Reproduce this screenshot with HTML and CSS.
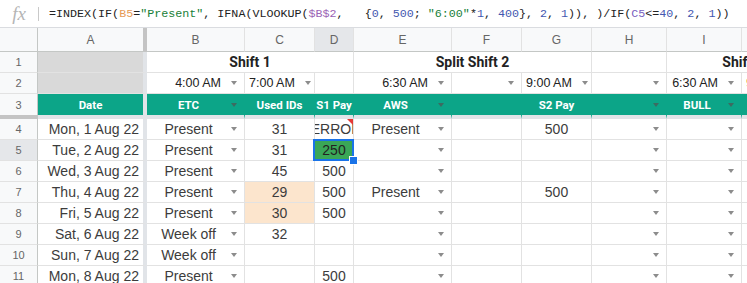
FILE: index.html
```html
<!DOCTYPE html>
<html lang="en">

<head>
    <meta charset="UTF-8">
    <meta name="viewport" content="width=device-width, initial-scale=1.0">
    <title>Shift Pay</title>
    <link rel="stylesheet" href="styles.css">
</head>

<body>
    <!-- barra de formula -->
    <div class="fbar">
        <span class="fx">fx</span>
        <span class="fsep"></span>
        <span class="formula">=INDEX(IF(<span class="ref1">B5</span>=<span class="str">"Present"</span>, IFNA(VLOOKUP(<span class="ref2">$B$2</span>,   {<span class="num">0</span>, <span class="num">500</span>; <span class="str">"6:00"</span>*<span class="num">1</span>, <span class="num">400</span>}, <span class="num">2</span>, <span class="num">1</span>)), )/IF(<span class="ref3">C5</span>&lt;=<span class="num">40</span>, <span class="num">2</span>, <span class="num">1</span>))</span>
    </div>

    <div class="sheet">
        <div class="row colhead">
            <div class="cell corner"></div>
            <div class="cell colh frz">A</div>
            <div class="cell colh">B</div>
            <div class="cell colh">C</div>
            <div class="cell colh selcol">D</div>
            <div class="cell colh">E</div>
            <div class="cell colh">F</div>
            <div class="cell colh">G</div>
            <div class="cell colh">H</div>
            <div class="cell colh">I</div>
            <div class="cell colh">J</div>
        </div>

        <div class="row">
            <div class="cell rnum">1</div>
            <div class="cell grey frz"></div>
            <div class="cell title span3">Shift 1</div>
            <div class="cell title span3">Split Shift 2</div>
            <div class="cell"></div>
            <div class="cell title span2">Shift 3</div>
        </div>

        <div class="row">
            <div class="cell rnum">2</div>
            <div class="cell grey frz"></div>
            <div class="cell dd time"><span class="v">4:00 AM</span></div>
            <div class="cell dd time"><span class="v">7:00 AM</span></div>
            <div class="cell"></div>
            <div class="cell dd time"><span class="v">6:30 AM</span></div>
            <div class="cell dd time"></div>
            <div class="cell dd time"><span class="v">9:00 AM</span></div>
            <div class="cell dd time"></div>
            <div class="cell dd time"><span class="v">6:30 AM</span></div>
            <div class="cell time orange"><span>9:00 AM</span></div>
        </div>

        <div class="row head">
            <div class="cell rnum">3</div>
            <div class="cell hd frz">Date</div>
            <div class="cell hd dd"><span class="v">ETC</span></div>
            <div class="cell hd">Used IDs</div>
            <div class="cell hd">S1 Pay</div>
            <div class="cell hd dd"><span class="v">AWS</span></div>
            <div class="cell hd"></div>
            <div class="cell hd">S2 Pay</div>
            <div class="cell hd dd"></div>
            <div class="cell hd dd"><span class="v">BULL</span></div>
            <div class="cell hd left">S3 Pay</div>
        </div>

        <div class="row">
            <div class="cell rnum">4</div>
            <div class="cell right frz">Mon, 1 Aug 22</div>
            <div class="cell dd"><span class="v">Present</span></div>
            <div class="cell center">31</div>
            <div class="cell center err"><span>#ERROR!</span></div>
            <div class="cell dd"><span class="v">Present</span></div>
            <div class="cell"></div>
            <div class="cell center">500</div>
            <div class="cell dd"></div>
            <div class="cell dd"></div>
            <div class="cell"></div>
        </div>

        <div class="row">
            <div class="cell rnum selrow">5</div>
            <div class="cell right frz">Tue, 2 Aug 22</div>
            <div class="cell dd"><span class="v">Present</span></div>
            <div class="cell center">31</div>
            <div class="cell center sel">250</div>
            <div class="cell dd"></div>
            <div class="cell"></div>
            <div class="cell"></div>
            <div class="cell dd"></div>
            <div class="cell dd"></div>
            <div class="cell"></div>
        </div>

        <div class="row">
            <div class="cell rnum">6</div>
            <div class="cell right frz">Wed, 3 Aug 22</div>
            <div class="cell dd"><span class="v">Present</span></div>
            <div class="cell center">45</div>
            <div class="cell center">500</div>
            <div class="cell dd"></div>
            <div class="cell"></div>
            <div class="cell"></div>
            <div class="cell dd"></div>
            <div class="cell dd"></div>
            <div class="cell"></div>
        </div>

        <div class="row">
            <div class="cell rnum">7</div>
            <div class="cell right frz">Thu, 4 Aug 22</div>
            <div class="cell dd"><span class="v">Present</span></div>
            <div class="cell center peach">29</div>
            <div class="cell center">500</div>
            <div class="cell dd"><span class="v">Present</span></div>
            <div class="cell"></div>
            <div class="cell center">500</div>
            <div class="cell dd"></div>
            <div class="cell dd"></div>
            <div class="cell"></div>
        </div>

        <div class="row">
            <div class="cell rnum">8</div>
            <div class="cell right frz">Fri, 5 Aug 22</div>
            <div class="cell dd"><span class="v">Present</span></div>
            <div class="cell center peach">30</div>
            <div class="cell center">500</div>
            <div class="cell dd"></div>
            <div class="cell"></div>
            <div class="cell"></div>
            <div class="cell dd"></div>
            <div class="cell dd"></div>
            <div class="cell"></div>
        </div>

        <div class="row">
            <div class="cell rnum">9</div>
            <div class="cell right frz">Sat, 6 Aug 22</div>
            <div class="cell dd"><span class="v">Week off</span></div>
            <div class="cell center">32</div>
            <div class="cell"></div>
            <div class="cell dd"></div>
            <div class="cell"></div>
            <div class="cell"></div>
            <div class="cell dd"></div>
            <div class="cell dd"></div>
            <div class="cell"></div>
        </div>

        <div class="row">
            <div class="cell rnum">10</div>
            <div class="cell right frz">Sun, 7 Aug 22</div>
            <div class="cell dd"><span class="v">Week off</span></div>
            <div class="cell"></div>
            <div class="cell"></div>
            <div class="cell dd"></div>
            <div class="cell"></div>
            <div class="cell"></div>
            <div class="cell dd"></div>
            <div class="cell dd"></div>
            <div class="cell"></div>
        </div>

        <div class="row">
            <div class="cell rnum">11</div>
            <div class="cell right frz">Mon, 8 Aug 22</div>
            <div class="cell dd"><span class="v">Present</span></div>
            <div class="cell"></div>
            <div class="cell center">500</div>
            <div class="cell dd"></div>
            <div class="cell"></div>
            <div class="cell"></div>
            <div class="cell dd"></div>
            <div class="cell dd"></div>
            <div class="cell"></div>
        </div>
    </div>
</body>

</html>
```

FILE: styles.css
```css
/* planilha de turnos */
* {
    box-sizing: border-box;
}

body {
    margin: 0;
    overflow: hidden;
    background: #fff;
    font-family: "Liberation Sans", Arial, sans-serif;
    color: #3c3c3c;
}

/* barra de formula */
.fbar {
    height: 28px;
    display: flex;
    align-items: center;
    border-bottom: 1px solid #dadce0;
}

.fx {
    width: 38px;
    text-align: center;
    font-family: "Liberation Serif", serif;
    font-style: italic;
    font-size: 19px;
    color: #b5b5b5;
}

.fsep {
    width: 1px;
    height: 14px;
    background: #c9c9c9;
}

.formula {
    margin-left: 10px;
    font-family: "Liberation Mono", monospace;
    font-size: 11.7px;
    white-space: pre;
    color: #222;
}

.ref1 { color: #e69a55; }
.ref2 { color: #9b63b5; }
.ref3 { color: #7a5fc0; }
.str { color: #188038; }
.num { color: #4458b0; }

/* grade */
.sheet {
    width: 820px;
}

.row {
    display: grid;
    grid-template-columns: 38px 109px 98px 70px 39px 98px 70px 70px 75px 75px 78px;
    height: 21px;
}

.cell {
    display: flex;
    align-items: center;
    padding: 0 4px;
    border-right: 1px solid #e2e2e2;
    border-bottom: 1px solid #e2e2e2;
    white-space: nowrap;
    overflow: hidden;
    font-size: 14px;
}

.frz {
    border-right: 4px solid #e1e4e8;
}

.colhead {
    height: 24px;
}

.colhead .cell {
    background: #f8f9fa;
    border-bottom-color: #c4c7c5;
}

.colh {
    justify-content: center;
    font-size: 12px;
    color: #666;
}

.colhead .frz {
    border-right-color: #c4c4c4;
}

.selcol {
    background: #e5e7ea !important;
}

.corner {
    border-right-color: #c4c7c5;
}

.rnum {
    justify-content: center;
    background: #f8f9fa;
    font-size: 11px;
    color: #666;
    border-right-color: #c4c7c5;
}

.selrow {
    background: #e5e7ea;
}

.grey {
    background: #d9d9d9;
}

.title {
    justify-content: center;
    font-family: Roboto, sans-serif;
    font-weight: bold;
    font-size: 14px;
    color: #222;
}

.span3 { grid-column: span 3; }
.span2 { grid-column: span 2; }

.center { justify-content: center; }
.right { justify-content: flex-end; }
.left { justify-content: flex-start; }

/* listas suspensas */
.dd {
    padding-right: 7px;
}

.dd .v {
    flex: 1;
    text-align: center;
    margin-right: 5px;
}

.dd::after {
    content: "";
    margin-left: auto;
    border-left: 3.5px solid transparent;
    border-right: 3.5px solid transparent;
    border-top: 4px solid #8c8c8c;
}

.time {
    font-size: 12.5px;
    color: #222;
}

.time .v {
    text-align: right;
    margin-right: 10px;
}

.orange {
    color: #e69138;
}

/* cabecalho verde */
.head {
    height: 25px;
}

.head .cell {
    border-bottom: 4px solid #e1e4e8;
}

.hd {
    background: #0ca588;
    border-right-color: #0ca588;
    justify-content: center;
    font-family: Roboto, sans-serif;
    font-weight: bold;
    font-size: 11.5px;
    color: #fff;
}

.hd.frz {
    border-right-color: #e1e4e8;
}

.hd.dd::after {
    border-top-color: #3d6b61;
}

.head .rnum {
    border-bottom-color: #c4c4c4;
}

.peach {
    background: #fce5cd;
}

/* celulas especiais */
.err {
    position: relative;
}

.err::after {
    content: "";
    position: absolute;
    top: 0;
    right: 0;
    border-left: 6px solid transparent;
    border-top: 6px solid #e53935;
}

.sel {
    position: relative;
    overflow: visible;
    z-index: 2;
    background: #3aa757;
    color: #222;
}

.sel::before {
    content: "";
    position: absolute;
    top: -1px;
    left: -2px;
    right: -1px;
    bottom: -1px;
    border: 2px solid #1a73e8;
}

.sel::after {
    content: "";
    position: absolute;
    right: -5px;
    bottom: -5px;
    width: 7px;
    height: 7px;
    background: #1a73e8;
    border: 1px solid #fff;
}
```
